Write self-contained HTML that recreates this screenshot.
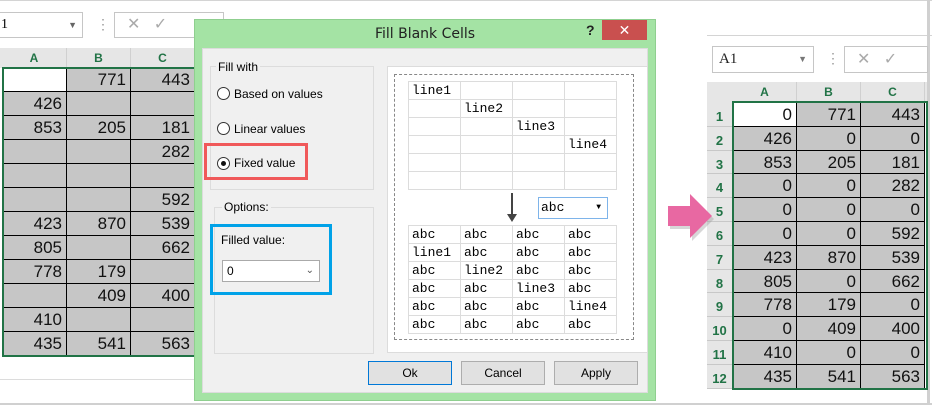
<!DOCTYPE html>
<html><head><meta charset="utf-8"><style>
*{box-sizing:border-box;margin:0;padding:0}
body{width:932px;height:410px;background:#fff;position:relative;overflow:hidden;font-family:"Liberation Sans",sans-serif}
.a{position:absolute}
.cell{position:absolute;background:#c6c6c6;border-right:1px solid #000;border-bottom:1px solid #000;font-size:17px;text-align:right;padding-right:4px;line-height:24px;color:#111}
.hd{position:absolute;background:#e6e6e6;border-right:1px solid #d0d0d0;border-bottom:1px solid #c8c8c8;font-size:12px;font-weight:bold;color:#217346;text-align:center}
.dl{font-size:12px;color:#000}
.g td{border:1px solid #dcdcdc;width:52px;height:18px;font-family:"Liberation Mono",monospace;font-size:13px;padding-left:3px;line-height:14px}
.g{border-collapse:collapse;position:absolute;background:#fff}
.btn{position:absolute;height:24px;width:84px;border:1px solid #adadad;background:#e1e1e1;font-size:12px;text-align:center;line-height:22px}
.rad{position:absolute;width:13px;height:13px;border:1px solid #333;border-radius:50%;background:#fff}
</style></head><body>
<div class="a" style="left:0;top:0;width:932px;height:1px;background:#d4d4d4"></div>
<div class="a" style="left:-2px;top:12px;width:85px;height:26px;border:1px solid #c6c6c6;font-size:14px;line-height:24px;padding-left:2px;font-family:'Liberation Serif',serif">1<span style="position:absolute;right:5px;top:0;font-size:9px;color:#666">▼</span></div>
<div class="a" style="left:96px;top:16px;color:#999;font-size:14px">⋮</div>
<div class="a" style="left:114px;top:12px;width:110px;height:26px;border:1px solid #c6c6c6;color:#aaa;font-size:16px;line-height:24px;padding-left:12px">✕ &nbsp;&nbsp;✓</div>
<div class="a" style="left:0;top:48px;width:200px;height:20px;background:#e6e6e6"></div>
<div class="hd" style="left:2px;top:48px;width:65px;height:20px;line-height:20px">A</div>
<div class="hd" style="left:67px;top:48px;width:64px;height:20px;line-height:20px">B</div>
<div class="hd" style="left:131px;top:48px;width:64px;height:20px;line-height:20px">C</div>
<div id="L"></div>
<div class="a" style="left:2px;top:67px;width:196px;height:290px;border:2px solid #217346"></div>
<div class="a" style="left:707px;top:35px;width:225px;height:1px;background:#d4d4d4"></div>
<div class="a" style="left:927px;top:0;width:3px;height:404px;background:#d0d0d0"></div>
<div class="a" style="left:0;top:403px;width:932px;height:2px;background:#d0d0d0"></div>
<div class="a" style="left:712px;top:46px;width:102px;height:27px;border:1px solid #c6c6c6;font-size:15px;line-height:25px;padding-left:6px;font-family:'Liberation Serif',serif;color:#222">A1<span style="position:absolute;right:6px;top:0;font-size:9px;color:#777">▼</span></div>
<div class="a" style="left:826px;top:50px;color:#999;font-size:14px">⋮</div>
<div class="a" style="left:844px;top:46px;width:84px;height:27px;border:1px solid #c6c6c6;color:#aaa;font-size:16px;line-height:25px;padding-left:12px">✕ &nbsp;&nbsp;✓</div>
<div class="a" style="left:707px;top:82px;width:220px;height:21px;background:#e6e6e6"></div>
<div class="hd" style="left:733px;top:82px;width:64px;height:21px;line-height:21px">A</div>
<div class="hd" style="left:797px;top:82px;width:64px;height:21px;line-height:21px">B</div>
<div class="hd" style="left:861px;top:82px;width:64px;height:21px;line-height:21px">C</div>
<div id="R"></div>
<div class="a" style="left:732px;top:101px;width:196px;height:289px;border:2px solid #217346"></div>
<svg class="a" style="left:664px;top:190px" width="52" height="56"><polygon points="4,16 26,16 26,4 48,26 26,48 26,36 4,36" fill="#9a9a9a" opacity=".4" transform="translate(2,3)"/><polygon points="4,16 26,16 26,4 48,26 26,48 26,36 4,36" fill="#e868a2"/></svg>
<div class="a" style="left:194px;top:19px;width:462px;height:382px;background:#a4e3a4;border:1px solid #8fcf8f"></div>
<div class="a" style="left:194px;top:26px;width:462px;text-align:center;font-size:14px;color:#222;font-family:'DejaVu Sans',sans-serif">Fill Blank Cells</div>
<div class="a" style="left:586px;top:22px;font-size:14px;font-weight:bold;color:#222">?</div>
<div class="a" style="left:602px;top:20px;width:45px;height:20px;background:#c9504f;color:#fff;text-align:center;font-size:14px;line-height:20px">✕</div>
<div class="a" style="left:202px;top:48px;width:446px;height:345px;background:#f0f0f0;border:1px solid #dcdcdc"></div>
<div class="a" style="left:210px;top:66px;width:164px;height:124px;border:1px solid #dcdcdc"></div>
<div class="a dl" style="left:216px;top:60px;background:#f0f0f0;padding:0 2px">Fill with</div>
<div class="rad" style="left:217px;top:87px"></div><div class="a dl" style="left:234px;top:87px">Based on values</div>
<div class="rad" style="left:217px;top:122px"></div><div class="a dl" style="left:234px;top:122px">Linear values</div>
<div class="rad" style="left:217px;top:157px"></div><div class="a" style="left:221px;top:161px;width:5px;height:5px;border-radius:50%;background:#111"></div><div class="a dl" style="left:234px;top:156px">Fixed value</div>
<div class="a" style="left:204px;top:143px;width:104px;height:37px;border:3px solid #f0595a"></div>
<div class="a" style="left:214px;top:207px;width:160px;height:147px;border:1px solid #dcdcdc"></div>
<div class="a dl" style="left:222px;top:200px;background:#f0f0f0;padding:0 2px">Options:</div>
<div class="a" style="left:210px;top:224px;width:122px;height:71px;border:3px solid #00a2e8"></div>
<div class="a dl" style="left:221px;top:233px">Filled value:</div>
<div class="a" style="left:222px;top:260px;width:98px;height:22px;background:#fff;border:1px solid #aaa;font-size:12px;line-height:20px;padding-left:4px">0<span style="position:absolute;right:5px;top:0;color:#555;font-size:10px">⌄</span></div>
<div class="a" style="left:387px;top:66px;width:261px;height:287px;background:#fff;border:1px solid #dcdcdc"></div>
<div class="a" style="left:394px;top:74px;width:240px;height:266px;border:1px dashed #888"></div>
<table class="g" style="left:408px;top:81px"><tr><td>line1</td><td></td><td></td><td></td></tr><tr><td></td><td>line2</td><td></td><td></td></tr><tr><td></td><td></td><td>line3</td><td></td></tr><tr><td></td><td></td><td></td><td>line4</td></tr><tr><td></td><td></td><td></td><td></td></tr><tr><td></td><td></td><td></td><td></td></tr></table>
<div class="a" style="left:511px;top:193px;width:2px;height:24px;background:#444"></div>
<svg class="a" style="left:507px;top:214px" width="10" height="9"><polygon points="0,0 10,0 5,8" fill="#444"/></svg>
<div class="a" style="left:538px;top:197px;width:70px;height:22px;border:1px solid #7eb4ea;font-family:'Liberation Mono',monospace;font-size:13px;line-height:20px;padding-left:2px;background:#fff">abc<span style="position:absolute;right:6px;top:0;font-size:8px">▼</span></div>
<table class="g" style="left:408px;top:225px"><tr><td>abc</td><td>abc</td><td>abc</td><td>abc</td></tr><tr><td>line1</td><td>abc</td><td>abc</td><td>abc</td></tr><tr><td>abc</td><td>line2</td><td>abc</td><td>abc</td></tr><tr><td>abc</td><td>abc</td><td>line3</td><td>abc</td></tr><tr><td>abc</td><td>abc</td><td>abc</td><td>line4</td></tr><tr><td>abc</td><td>abc</td><td>abc</td><td>abc</td></tr></table>
<div class="btn" style="left:368px;top:361px;border-color:#0078d7">Ok</div>
<div class="btn" style="left:461px;top:361px">Cancel</div>
<div class="btn" style="left:554px;top:361px">Apply</div>
<script>
var L=[["","771","443"],["426","",""],["853","205","181"],["","","282"],["","",""],["","","592"],["423","870","539"],["805","","662"],["778","179",""],["","409","400"],["410","",""],["435","541","563"]];
var h="",r="";
for(var i=0;i<12;i++){for(var j=0;j<3;j++){var x=[2,67,131][j],w=[65,64,64][j];
h+='<div class="cell" style="left:'+x+'px;top:'+(68+i*24)+'px;width:'+w+'px;height:24px;'+(i==0&&j==0?'background:#fff;':'')+'">'+L[i][j]+'</div>';
var v=L[i][j]||"0";var rx=[733,797,861][j];
r+='<div class="cell" style="left:'+rx+'px;top:'+(103+i*23.8)+'px;width:64px;height:23.8px;'+(i==0&&j==0?'background:#fff;':'')+'">'+v+'</div>';}
r+='<div class="hd" style="left:707px;top:'+(103+i*23.8)+'px;width:26px;height:23.8px;line-height:28px;font-size:13px">'+(i+1)+'</div>';}
for(var k=0;k<2;k++)h+='<div class="a" style="left:0;top:'+(356+k*24)+'px;width:195px;height:24px;border-bottom:1px solid #dcdcdc"></div>';
document.getElementById("L").innerHTML=h;document.getElementById("R").innerHTML=r;
</script>
</body></html>
